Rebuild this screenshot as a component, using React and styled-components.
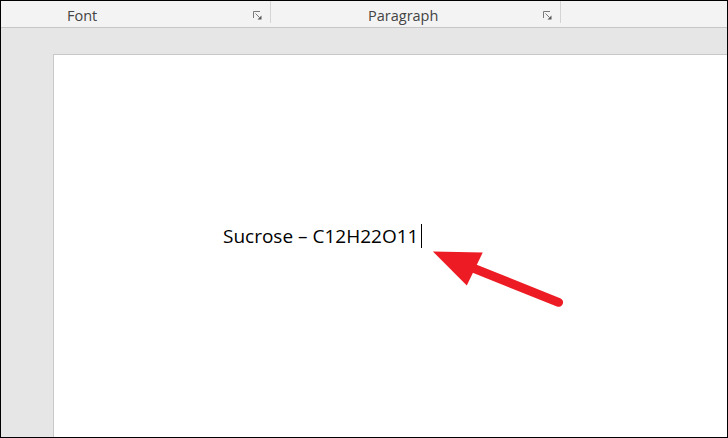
import styled, { createGlobalStyle } from 'styled-components'

const GlobalStyle = createGlobalStyle`
  html, body {
    margin: 0;
    padding: 0;
    background: #fff;
  }
  * {
    box-sizing: border-box;
  }
`

const Window = styled.div`
  width: 728px;
  height: 438px;
  border: 1px solid #000;
  display: flex;
  flex-direction: column;
  background: #e6e6e6;
  overflow: hidden;
  font-family: 'Open Sans', 'Noto Sans', sans-serif;
`

const Ribbon = styled.div`
  height: 27px;
  flex: none;
  display: flex;
  background: #f3f3f3;
  border-bottom: 1px solid #c6c6c6;
`

const Group = styled.div`
  width: ${p => p.width}px;
  display: flex;
  align-items: center;
  padding-left: ${p => p.labelAt}px;
  padding-right: 8px;
  border-right: 1px solid #d4d4d4;
  margin-bottom: 4px;
`

const GroupLabel = styled.span`
  flex: 1;
  font-size: 14.5px;
  color: #444;
  padding-top: 6px;
`

const Launcher = styled.svg`
  width: 9px;
  height: 9px;
  margin-top: 6px;
`

const Workspace = styled.div`
  flex: 1;
  padding: 26px 0 0 52px;
  display: flex;
`

const Page = styled.div`
  position: relative;
  flex: 1;
  background: #fff;
  border-top: 1px solid #c8c8c8;
  border-left: 1px solid #c8c8c8;
  padding: 168px 0 0 169px;
`

const Line = styled.div`
  display: flex;
  align-items: center;
  font-family: 'Open Sans', 'Noto Sans', sans-serif;
  font-size: 19px;
  color: #000;
  height: 26px;
`

const Caret = styled.span`
  display: inline-block;
  width: 1px;
  height: 24px;
  background: #000;
  margin-left: 3px;
`

const Arrow = styled.svg`
  position: absolute;
  left: 0;
  top: 0;
  width: 100%;
  height: 100%;
  pointer-events: none;
`

function DialogLauncher () {
  return (
    <Launcher viewBox='0 0 9 9'>
      <path d='M0.5 7 V0.5 H7' fill='none' stroke='#7a7a7a' strokeWidth='1' />
      <path d='M2.5 2.5 L6.5 6.5' stroke='#7a7a7a' strokeWidth='1' />
      <path d='M8.5 4.5 V8.5 H4.5 Z' fill='#5a5a5a' />
    </Launcher>
  )
}

export default function App () {
  return (
    <>
      <GlobalStyle />
      <Window>
        <Ribbon>
          <Group width={270} labelAt={66}>
            <GroupLabel>Font</GroupLabel>
            <DialogLauncher />
          </Group>
          <Group width={290} labelAt={97}>
            <GroupLabel>Paragraph</GroupLabel>
            <DialogLauncher />
          </Group>
        </Ribbon>
        <Workspace>
          <Page>
            <Line>
              Sucrose – C12H22O11
              <Caret />
            </Line>
            {/* annotation arrow, page coordinates */}
            <Arrow viewBox='0 0 673 383'>
              <line x1='505' y1='248' x2='410' y2='210' stroke='#ed1c24' strokeWidth='9' strokeLinecap='round' />
              <polygon points='379,197 429,198 413,231' fill='#ed1c24' />
            </Arrow>
          </Page>
        </Workspace>
      </Window>
    </>
  )
}
